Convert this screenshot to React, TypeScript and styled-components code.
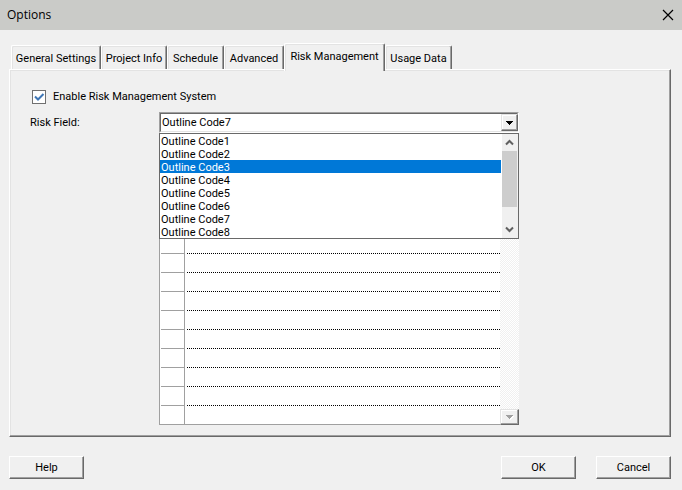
import React, { useState } from "react";
import styled, { createGlobalStyle, css } from "styled-components";

const face = "#f0f0f0";
const light = "#e3e3e3";
const shadow = "#a0a0a0";
const dark = "#696969";

const raised = css`
  border: 1px solid;
  border-color: #fff ${dark} ${dark} #fff;
  box-shadow: inset -1px -1px ${shadow};
`;

const raisedSoft = css`
  border: 1px solid;
  border-color: ${light} ${dark} ${dark} ${light};
  box-shadow: inset -1px -1px ${shadow}, inset 1px 1px #fff;
`;

const GlobalStyle = createGlobalStyle`
  *, *::before, *::after { box-sizing: border-box; }
  body { margin: 0; background: ${face}; }
  body, button, select, input {
    font-family: Roboto, "Liberation Sans", sans-serif;
    font-size: 11px;
    line-height: 13px;
    color: #000;
  }
`;

const Dialog = styled.main`
  display: flex;
  flex-direction: column;
  min-height: 100vh;
  background: ${face};
`;

const TitleBar = styled.header`
  display: flex;
  align-items: center;
  justify-content: space-between;
  height: 30px;
  padding: 0 8px 0 7px;
  background: #cacbc8;
`;

const Title = styled.h1`
  margin: 0;
  font: 12px/16px "Open Sans", "Noto Sans", sans-serif;
`;

const CloseButton = styled.button`
  display: flex;
  padding: 0;
  border: 0;
  background: none;
`;

const Tabs = styled.div`
  display: flex;
  align-items: flex-end;
  margin-top: 13px;
  padding: 0 11px;
`;

const Tab = styled.button<{ $selected: boolean; $width: number }>`
  width: ${(p) => p.$width}px;
  height: 24px;
  padding: 2px 0 0;
  white-space: nowrap;
  background: ${face};
  border: 1px solid;
  border-color: #fff ${dark} transparent #fff;
  border-bottom: 0;
  border-radius: 2px 2px 0 0;
  box-shadow: inset -1px 0 ${shadow}, inset 1px 1px ${light};
  ${(p) =>
    p.$selected &&
    css`
      z-index: 1;
      height: 28px;
      margin-bottom: -2px;
      padding: 0 0 2px;
    `}
`;

const Panel = styled.section`
  margin: 0 11px 0 9px;
  padding: 19px 20px 11px;
  border: 1px solid;
  border-color: #fff ${dark} ${dark} #fff;
  box-shadow: inset -1px -1px ${shadow}, inset 1px 1px ${light};
`;

const CheckLabel = styled.label`
  display: flex;
  gap: 7px;
  padding-left: 2px;
  line-height: 15px;
`;

const CheckWrap = styled.span`
  display: grid;
  margin-top: 1px;
  > * {
    grid-area: 1 / 1;
  }
`;

const CheckBox = styled.input`
  appearance: none;
  width: 14px;
  height: 14px;
  margin: 0;
  background: #fff;
  border: 1px solid #707070;
  &:not(:checked) + svg {
    visibility: hidden;
  }
`;

const Field = styled.div`
  display: grid;
  grid-template-columns: 129px minmax(0, 360px);
  margin-top: 8px;
`;

const FieldLabel = styled.label`
  padding-top: 4px;
`;

const FieldBody = styled.div`
  position: relative;
`;

const Combo = styled.div`
  display: grid;
  grid-template-columns: 1fr 17px;
  height: 21px;
  border: 1px solid;
  border-color: ${shadow} #fff #fff ${shadow};
  > * {
    grid-row: 1;
  }
`;

const Select = styled.select`
  appearance: none;
  grid-column: 1 / 3;
  width: 100%;
  height: 19px;
  padding: 0 1px;
  border: 1px solid;
  border-color: ${dark} ${light} ${light} ${dark};
  border-radius: 0;
  background: #fff;
  outline: 0;
`;

const ComboArrow = styled.span`
  display: grid;
  place-items: center;
  grid-column: 2;
  height: 17px;
  margin-top: 1px;
  background: ${face};
  pointer-events: none;
  ${raisedSoft}
`;

const List = styled.div`
  position: absolute;
  top: 21px;
  left: 0;
  right: 0;
  display: flex;
  background: #fff;
  border: 1px solid ${dark};
`;

const Options = styled.div`
  flex: 1;
  margin-right: 1px;
`;

const Option = styled.div<{ $active: boolean }>`
  height: 13px;
  padding: 1px 0 0 1px;
  white-space: nowrap;
  background: ${(p) => (p.$active ? "#0078d7" : "transparent")};
  color: ${(p) => (p.$active ? "#fff" : "#000")};
`;

const ScrollBar = styled.div`
  display: grid;
  grid-template-rows: 17px 56px 1fr;
  width: 16px;
  padding-right: 1px;
  background: ${face};
`;

const ScrollButton = styled.button`
  display: grid;
  place-items: center;
  align-self: end;
  height: 17px;
  padding: 0;
  border: 0;
  background: none;
`;

const Thumb = styled.div`
  background: #cdcdcd;
`;

const Sheet = styled.div`
  display: flex;
  margin-top: 6px;
`;

const Grid = styled.table`
  flex: 1;
  border-collapse: separate;
  border-spacing: 0;
  table-layout: fixed;
  background: #fff;
  border: 1px solid ${shadow};
  border-right: 0;
`;

const Cell = styled.td<{ $kind: "head" | "value" }>`
  width: ${(p) => (p.$kind === "head" ? "25px" : "auto")};
  padding: ${(p) => (p.$kind === "head" ? "0 0 0 1px" : "0 0 0 2px")};
  border-right: ${(p) => (p.$kind === "head" ? `1px solid ${shadow}` : "0")};
`;

const Rule = styled.div<{ $kind: "head" | "value" }>`
  height: 19px;
  border-bottom: ${(p) => (p.$kind === "head" ? `1px solid ${shadow}` : "1px dotted #000")};
  tr:last-child & {
    border-bottom: 0;
    height: 18px;
  }
`;

const SheetScroll = styled.div`
  display: flex;
  flex-direction: column;
  justify-content: flex-end;
  width: 19px;
  background: repeating-conic-gradient(#fff 0 25%, ${face} 0 50%) 0 0 / 2px 2px;
`;

const SheetButton = styled.button`
  display: grid;
  place-items: center;
  height: 16px;
  padding: 0;
  background: ${face};
  ${raisedSoft}
`;

const Footer = styled.footer`
  display: flex;
  gap: 20px;
  padding: 19px 11px 11px 9px;
`;

const PushButton = styled.button<{ $first?: boolean }>`
  width: 75px;
  height: 23px;
  padding: 0;
  margin-right: ${(p) => (p.$first ? "auto" : "0")};
  background: ${face};
  ${raised}
`;

const tabs = [
  { name: "General Settings", width: 90 },
  { name: "Project Info", width: 66 },
  { name: "Schedule", width: 57 },
  { name: "Advanced", width: 60 },
  { name: "Risk Management", width: 101 },
  { name: "Usage Data", width: 67 },
];
const codes = [1, 2, 3, 4, 5, 6, 7, 8].map((n) => `Outline Code${n}`);
const rows = Array.from({ length: 15 }, (_, i) => i);

function Chevron({ up }: { up?: boolean }) {
  return (
    <svg width="9" height="7" viewBox="0 0 9 7" fill="none" stroke="#606060" strokeWidth="2">
      <path d={up ? "M1 5.5 4.5 2 8 5.5" : "M1 1.5 4.5 5 8 1.5"} />
    </svg>
  );
}

export default function App() {
  const [tab, setTab] = useState("Risk Management");
  const [enabled, setEnabled] = useState(true);
  const [field, setField] = useState("Outline Code7");
  const [active, setActive] = useState("Outline Code3");

  return (
    <Dialog>
      <GlobalStyle />
      <TitleBar>
        <Title>Options</Title>
        <CloseButton aria-label="Close">
          <svg width="12" height="12" viewBox="0 0 12 12" stroke="#000" strokeWidth="1.2">
            <path d="M1 1 11 11M11 1 1 11" />
          </svg>
        </CloseButton>
      </TitleBar>
      <Tabs role="tablist">
        {tabs.map((t) => (
          <Tab
            key={t.name}
            role="tab"
            aria-selected={t.name === tab}
            $selected={t.name === tab}
            $width={t.width}
            onClick={() => setTab(t.name)}
          >
            {t.name}
          </Tab>
        ))}
      </Tabs>
      <Panel role="tabpanel" aria-label={tab}>
        <CheckLabel>
          <CheckWrap>
            <CheckBox type="checkbox" checked={enabled} onChange={(e) => setEnabled(e.target.checked)} />
            <svg width="14" height="14" viewBox="0 0 14 14" fill="none" stroke="#3f76b5" strokeWidth="2" pointerEvents="none">
              <path d="M3 6.5 6 9.5 11.5 4" />
            </svg>
          </CheckWrap>
          Enable Risk Management System
        </CheckLabel>
        <Field>
          <FieldLabel htmlFor="risk-field">Risk Field:</FieldLabel>
          <FieldBody>
            <Combo>
              <Select id="risk-field" value={field} onChange={(e) => setField(e.target.value)}>
                {codes.map((c) => (
                  <option key={c}>{c}</option>
                ))}
              </Select>
              <ComboArrow>
                <svg width="7" height="4" viewBox="0 0 7 4" shapeRendering="crispEdges">
                  <path d="M0 0h7v1H6v1H5v1H4v1H3V3H2V2H1V1H0z" />
                </svg>
              </ComboArrow>
            </Combo>
            <List>
              <Options role="listbox" aria-label="Risk Field">
                {codes.map((c) => (
                  <Option
                    key={c}
                    role="option"
                    aria-selected={c === active}
                    $active={c === active}
                    onMouseEnter={() => setActive(c)}
                    onClick={() => setField(c)}
                  >
                    {c}
                  </Option>
                ))}
              </Options>
              <ScrollBar>
                <ScrollButton aria-label="Scroll up">
                  <Chevron up />
                </ScrollButton>
                <Thumb />
                <ScrollButton aria-label="Scroll down">
                  <Chevron />
                </ScrollButton>
              </ScrollBar>
            </List>
            <Sheet>
              <Grid>
                <tbody>
                  {rows.map((r) => (
                    <tr key={r}>
                      <Cell $kind="head">
                        <Rule $kind="head" />
                      </Cell>
                      <Cell $kind="value">
                        <Rule $kind="value" />
                      </Cell>
                    </tr>
                  ))}
                </tbody>
              </Grid>
              <SheetScroll>
                <SheetButton aria-label="Scroll rows down" disabled>
                  <svg width="8" height="5" viewBox="0 0 8 5" shapeRendering="crispEdges">
                    <path d="M1 1h7v1H7v1H6v1H5v1H4z" fill="#fff" />
                    <path d="M0 0h7v1H6v1H5v1H4v1H3V3H2V2H1V1H0z" fill={shadow} />
                  </svg>
                </SheetButton>
              </SheetScroll>
            </Sheet>
          </FieldBody>
        </Field>
      </Panel>
      <Footer>
        <PushButton $first>Help</PushButton>
        <PushButton>OK</PushButton>
        <PushButton>Cancel</PushButton>
      </Footer>
    </Dialog>
  );
}
